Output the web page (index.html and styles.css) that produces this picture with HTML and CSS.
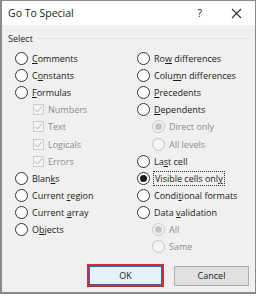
FILE: index.html
```html
<!DOCTYPE html>
<html lang="en">
<head>
    <meta charset="UTF-8">
    <title>Go To Special</title>
    <link rel="stylesheet" href="styles.css">
</head>
<body>
    <!-- Go To Special dialog -->
    <div class="dialog">
        <div class="titlebar">
            <span class="title">Go To Special</span>
            <span class="help">?</span>
            <svg class="close" width="11" height="11" viewBox="0 0 11 11">
                <path d="M1 1 L10 10 M10 1 L1 10" stroke="#333" stroke-width="1.1" fill="none"/>
            </svg>
        </div>

        <div class="content">
            <div class="group-label">
                <span>Select</span>
                <span class="rule"></span>
            </div>

            <div class="columns">
                <div class="col">
                    <div class="opt"><span class="radio"></span><span><u>C</u>omments</span></div>
                    <div class="opt"><span class="radio"></span><span>C<u>o</u>nstants</span></div>
                    <div class="opt"><span class="radio"></span><span><u>F</u>ormulas</span></div>
                    <div class="opt sub disabled"><span class="check"><svg width="9" height="9" viewBox="0 0 9 9"><path d="M1 4.5 L3.5 7 L8 1.5" stroke="#b5b5b5" stroke-width="1" fill="none"/></svg></span><span>Numbers</span></div>
                    <div class="opt sub disabled"><span class="check"><svg width="9" height="9" viewBox="0 0 9 9"><path d="M1 4.5 L3.5 7 L8 1.5" stroke="#b5b5b5" stroke-width="1" fill="none"/></svg></span><span>Text</span></div>
                    <div class="opt sub disabled"><span class="check"><svg width="9" height="9" viewBox="0 0 9 9"><path d="M1 4.5 L3.5 7 L8 1.5" stroke="#b5b5b5" stroke-width="1" fill="none"/></svg></span><span>Logicals</span></div>
                    <div class="opt sub disabled"><span class="check"><svg width="9" height="9" viewBox="0 0 9 9"><path d="M1 4.5 L3.5 7 L8 1.5" stroke="#b5b5b5" stroke-width="1" fill="none"/></svg></span><span>Errors</span></div>
                    <div class="opt"><span class="radio"></span><span>Blan<u>k</u>s</span></div>
                    <div class="opt"><span class="radio"></span><span>Current <u>r</u>egion</span></div>
                    <div class="opt"><span class="radio"></span><span>Current <u>a</u>rray</span></div>
                    <div class="opt"><span class="radio"></span><span>O<u>b</u>jects</span></div>
                </div>
                <div class="col">
                    <div class="opt"><span class="radio"></span><span>Ro<u>w</u> differences</span></div>
                    <div class="opt"><span class="radio"></span><span>Colu<u>m</u>n differences</span></div>
                    <div class="opt"><span class="radio"></span><span><u>P</u>recedents</span></div>
                    <div class="opt"><span class="radio"></span><span><u>D</u>ependents</span></div>
                    <div class="opt sub disabled"><span class="radio dot"></span><span>Direct only</span></div>
                    <div class="opt sub disabled"><span class="radio"></span><span>All levels</span></div>
                    <div class="opt"><span class="radio"></span><span>La<u>s</u>t cell</span></div>
                    <div class="opt"><span class="radio dot"></span><span class="focus">Visible cells onl<u>y</u></span></div>
                    <div class="opt"><span class="radio"></span><span>Condi<u>t</u>ional formats</span></div>
                    <div class="opt"><span class="radio"></span><span>Data <u>v</u>alidation</span></div>
                    <div class="opt sub disabled"><span class="radio dot"></span><span>All</span></div>
                    <div class="opt sub disabled"><span class="radio"></span><span>Same</span></div>
                </div>
            </div>

            <div class="buttons">
                <span class="highlight"><button class="btn default">OK</button></span>
                <button class="btn">Cancel</button>
            </div>
        </div>
    </div>
</body>
</html>
```

FILE: styles.css
```css
* {
    margin: 0;
    padding: 0;
    box-sizing: border-box;
}

body {
    font-family: 'Open Sans', 'Noto Sans', sans-serif;
    background-color: #ffffff;
    color: #1a1a1a;
}

/* Dialog frame */
.dialog {
    width: 256px;
    height: 294px;
    border: 1px solid #8a8a8a;
    border-left-width: 2px;
    border-bottom-width: 2px;
    background-color: #f0f0f0;
    display: flex;
    flex-direction: column;
}

/* Title bar */
.titlebar {
    height: 24px;
    background-color: #ffffff;
    display: flex;
    align-items: center;
    padding-left: 6px;
}

.title {
    font-size: 10.5px;
    flex: 1;
}

.help {
    font-size: 10.5px;
    margin-right: 29px;
}

.close {
    margin-right: 13px;
}

/* Body */
.content {
    flex: 1;
    display: flex;
    flex-direction: column;
    padding: 6px 4px 0 6px;
}

.group-label {
    display: flex;
    align-items: center;
    font-size: 9px;
    height: 14px;
}

.rule {
    flex: 1;
    height: 1px;
    background-color: #e2e2e2;
    margin-left: 5px;
    margin-right: 2px;
}

.columns {
    display: grid;
    grid-template-columns: 122px 1fr;
    padding-left: 7px;
    margin-top: 5px;
}

.opt {
    height: 17.1px;
    display: flex;
    align-items: center;
    font-size: 9px;
    white-space: nowrap;
}

.opt u {
    text-decoration-thickness: 1px;
    text-underline-offset: 1px;
}

.opt.sub {
    padding-left: 18px;
}

.col + .col .opt.sub {
    padding-left: 15px;
}

.disabled {
    color: #8d8d8d;
}

/* Radio buttons */
.radio {
    width: 13px;
    height: 13px;
    border: 1px solid #333333;
    border-radius: 50%;
    background-color: #ffffff;
    margin-right: 4px;
    display: flex;
    align-items: center;
    justify-content: center;
    flex-shrink: 0;
}

.radio.dot::after {
    content: "";
    width: 7px;
    height: 7px;
    border-radius: 50%;
    background-color: #1a1a1a;
}

.disabled .radio {
    border-color: #c4c4c4;
    background-color: #f4f4f4;
}

.disabled .radio.dot::after {
    background-color: #c4c4c4;
}

/* Checkboxes */
.check {
    width: 11px;
    height: 11px;
    border: 1px solid #cccccc;
    background-color: #f4f4f4;
    margin-right: 4px;
    display: flex;
    align-items: center;
    justify-content: center;
}

.focus {
    outline: 1px dotted #333333;
    outline-offset: 0;
    padding: 0 1px;
}

/* Buttons */
.buttons {
    display: flex;
    justify-content: flex-end;
    align-items: center;
    gap: 10px;
    margin-top: auto;
    margin-bottom: 5px;
    padding-right: 2px;
}

.highlight {
    border: 2px solid #e0262f;
    display: flex;
}

.btn {
    width: 75px;
    height: 20px;
    font-family: 'Open Sans', 'Noto Sans', sans-serif;
    font-size: 9px;
    border: 1px solid #adadad;
    background-color: #e1e1e1;
    color: #1a1a1a;
}

.btn.default {
    border-color: #0078d7;
    background-color: #e5f1fb;
    width: 73px;
    height: 19px;
}
```
